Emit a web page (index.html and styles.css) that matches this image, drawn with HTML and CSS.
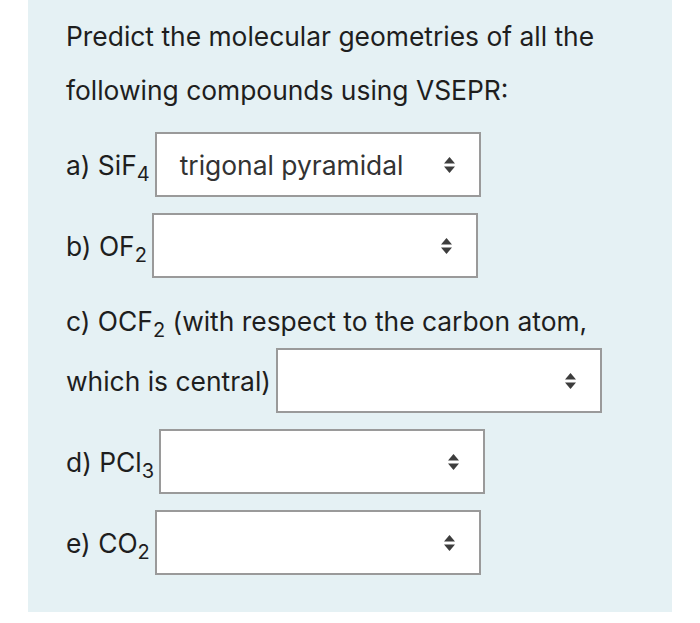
FILE: index.html
```html
<!DOCTYPE html>
<html>
<head>
<meta charset="utf-8">
<link rel="stylesheet" href="styles.css">
</head>
<body>
<div class="panel">
  <p class="line">Predict the molecular geometries of all the</p>
  <p class="line intro-end">following compounds using VSEPR:</p>

  <div class="row">
    <span class="label">a) SiF<sub>4</sub></span>
    <div class="select"><span class="value">trigonal pyramidal</span><svg class="arrows" viewBox="0 0 12 18"><path d="M6 1 L11.5 7.5 H0.5 Z"/><path d="M6 17 L11.5 10.5 H0.5 Z"/></svg></div>
  </div>

  <div class="row">
    <span class="label">b) OF<sub>2</sub></span>
    <div class="select"><span class="value"></span><svg class="arrows" viewBox="0 0 12 18"><path d="M6 1 L11.5 7.5 H0.5 Z"/><path d="M6 17 L11.5 10.5 H0.5 Z"/></svg></div>
  </div>

  <p class="line">c) OCF<sub>2</sub> (with respect to the carbon atom,</p>
  <div class="row">
    <span class="label">which is central)</span>
    <div class="select"><span class="value"></span><svg class="arrows" viewBox="0 0 12 18"><path d="M6 1 L11.5 7.5 H0.5 Z"/><path d="M6 17 L11.5 10.5 H0.5 Z"/></svg></div>
  </div>

  <div class="row">
    <span class="label">d) PCl<sub>3</sub></span>
    <div class="select"><span class="value"></span><svg class="arrows" viewBox="0 0 12 18"><path d="M6 1 L11.5 7.5 H0.5 Z"/><path d="M6 17 L11.5 10.5 H0.5 Z"/></svg></div>
  </div>

  <div class="row">
    <span class="label">e) CO<sub>2</sub></span>
    <div class="select"><span class="value"></span><svg class="arrows" viewBox="0 0 12 18"><path d="M6 1 L11.5 7.5 H0.5 Z"/><path d="M6 17 L11.5 10.5 H0.5 Z"/></svg></div>
  </div>
</div>
</body>
</html>
```
FILE: styles.css
```css
html, body {
  margin: 0;
  padding: 0;
  background: #ffffff;
}
body {
  font-family: "Inter", "Liberation Sans", sans-serif;
  color: #1e1e1e;
}
.panel {
  margin-left: 28px;
  width: 644px;
  height: 612px;
  box-sizing: border-box;
  background: #e5f1f4;
  padding: 9px 0 0 38px;
}
.line {
  margin: 0;
  font-size: 26.4px;
  line-height: 54px;
  white-space: nowrap;
}
.intro-end {
  margin-bottom: 15px;
}
.row {
  display: flex;
  align-items: center;
  margin-bottom: 16px;
  font-size: 26.4px;
}
.label {
  white-space: nowrap;
  margin-right: 5px;
}
sub {
  font-size: 20px;
  line-height: 0;
  vertical-align: -6px;
}
.select {
  box-sizing: border-box;
  width: 326px;
  height: 65px;
  background: #ffffff;
  border: 2px solid #9a9a9a;
  display: flex;
  align-items: center;
  justify-content: space-between;
  padding: 0 23px 0 23px;
  color: #333333;
  font-size: 26.4px;
}
.arrows {
  width: 13px;
  height: 18px;
  fill: #3d3d3d;
  flex: none;
}
```
